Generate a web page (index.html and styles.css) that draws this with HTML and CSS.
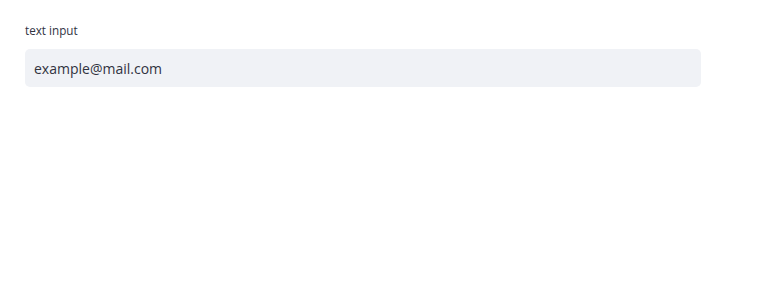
FILE: index.html
```html
<!DOCTYPE html>
<html>
<head>
<meta charset="utf-8">
<link rel="stylesheet" href="styles.css">
</head>
<body>
<div class="field">
  <label class="label" for="email">text input</label>
  <input class="input" id="email" type="text" value="example@mail.com">
</div>
</body>
</html>
```

FILE: styles.css
```css
html, body {
  margin: 0;
  padding: 0;
  background: #ffffff;
}
body {
  font-family: "Open Sans", "Noto Sans", sans-serif;
  color: #31333f;
}
.field {
  display: flex;
  flex-direction: column;
  padding: 22px 0 0 25px;
  width: 676px;
}
.label {
  font-size: 11.7px;
  line-height: 16px;
  color: #31333f;
  margin-bottom: 11px;
}
.input {
  box-sizing: border-box;
  height: 38px;
  width: 676px;
  border: none;
  outline: none;
  border-radius: 5px;
  background: #f0f2f6;
  padding: 0 9px;
  font-family: "Open Sans", "Noto Sans", sans-serif;
  font-size: 14px;
  color: #31333f;
}
```
